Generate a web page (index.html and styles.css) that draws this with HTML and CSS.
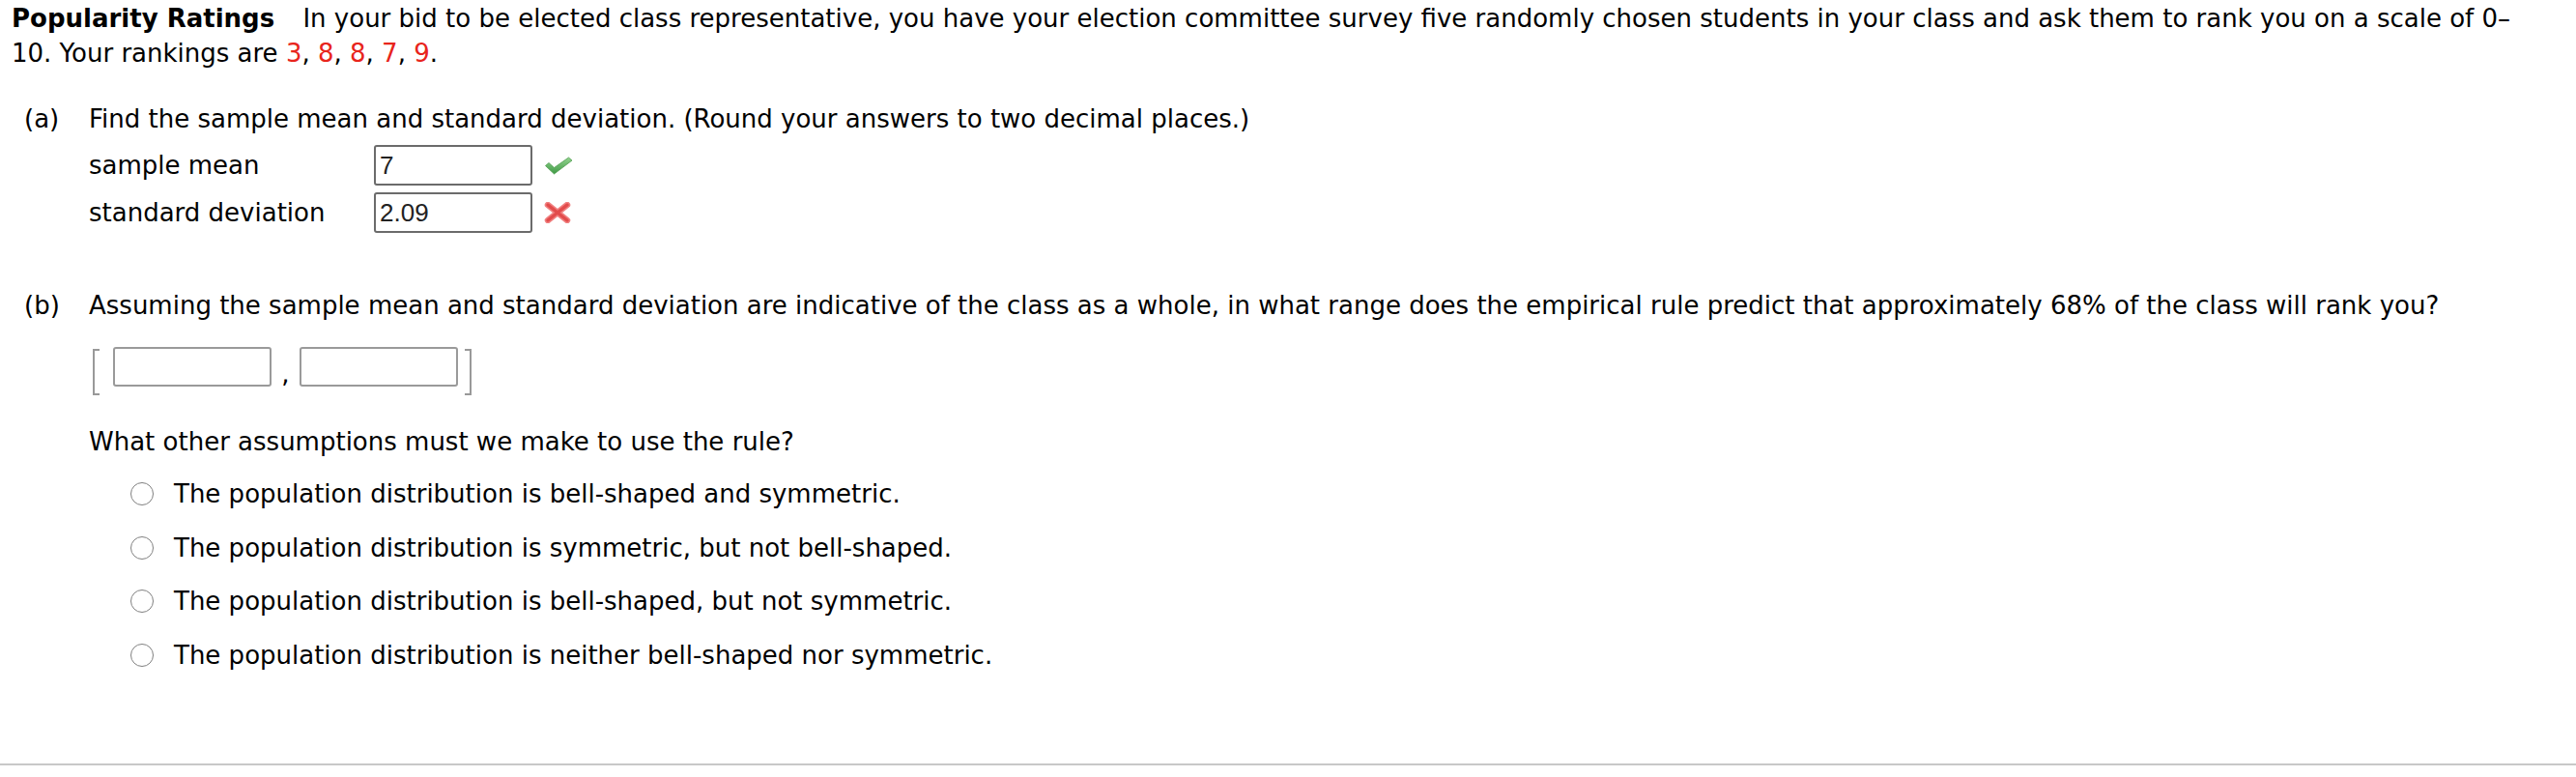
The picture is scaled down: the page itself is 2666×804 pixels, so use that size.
FILE: index.html
```html
<!DOCTYPE html>
<html lang="en">
<head>
<meta charset="utf-8">
<title>Popularity Ratings</title>
<link rel="stylesheet" href="styles.css">
</head>
<body>
<div class="problem">
  <p class="intro"><strong class="title">Popularity Ratings</strong> In your bid to be elected class representative, you have your election committee survey five randomly chosen students in your class and ask them to rank you on a scale of 0–10. Your rankings are <span class="red">3</span>, <span class="red">8</span>, <span class="red">8</span>, <span class="red">7</span>, <span class="red">9</span>.</p>

  <div class="part part-a">
    <div class="part-label">(a)</div>
    <div class="part-body">
      <p class="question">Find the sample mean and standard deviation. (Round your answers to two decimal places.)</p>
      <div class="answers">
        <div class="answer-row">
          <span class="answer-label">sample mean</span>
          <span class="field filled">7</span>
          <svg class="mark" width="30" height="19" viewBox="0 0 30 19" aria-hidden="true">
            <defs>
              <linearGradient id="gchk" x1="0" y1="0" x2="0" y2="1">
                <stop offset="0" stop-color="#93d38f"/>
                <stop offset="1" stop-color="#3f9a45"/>
              </linearGradient>
            </defs>
            <path d="M1.5 9.5 L5 6.5 L10.5 11.5 L25.5 1 L29 4 L10.5 18 Z" fill="url(#gchk)" stroke="#4f9d4f" stroke-width="0.8" stroke-linejoin="round"/>
          </svg>
        </div>
        <div class="answer-row">
          <span class="answer-label">standard deviation</span>
          <span class="field filled">2.09</span>
          <svg class="mark" width="28" height="22" viewBox="0 0 28 22" aria-hidden="true">
            <path d="M4 3 L24 19 M24 3 L4 19" stroke="#f08080" stroke-width="6.5" stroke-linecap="round" fill="none"/>
            <path d="M4 3 L24 19 M24 3 L4 19" stroke="#e24c4c" stroke-width="3.5" stroke-linecap="round" fill="none"/>
          </svg>
        </div>
      </div>
    </div>
  </div>

  <div class="part part-b">
    <div class="part-label">(b)</div>
    <div class="part-body">
      <p class="question">Assuming the sample mean and standard deviation are indicative of the class as a whole, in what range does the empirical rule predict that approximately 68% of the class will rank you?</p>
      <div class="interval">
        <span class="bracket left"></span>
        <span class="field empty"></span>
        <span class="comma">,</span>
        <span class="field empty"></span>
        <span class="bracket right"></span>
      </div>
      <p class="question follow">What other assumptions must we make to use the rule?</p>
      <ul class="choices">
        <li class="choice"><span class="radio"></span><span>The population distribution is bell-shaped and symmetric.</span></li>
        <li class="choice"><span class="radio"></span><span>The population distribution is symmetric, but not bell-shaped.</span></li>
        <li class="choice"><span class="radio"></span><span>The population distribution is bell-shaped, but not symmetric.</span></li>
        <li class="choice"><span class="radio"></span><span>The population distribution is neither bell-shaped nor symmetric.</span></li>
      </ul>
    </div>
  </div>
</div>
</body>
</html>
```

FILE: styles.css
```css
html, body {
  margin: 0;
  padding: 0;
  background: #ffffff;
}

body {
  font-family: "DejaVu Sans", Verdana, sans-serif;
  font-size: 26px;
  line-height: 36px;
  color: #000000;
}

.problem {
  padding: 1px 56px 94px 12px;
  border-bottom: 2px solid #c8c8c8;
}

.intro {
  margin: 0;
}

.title {
  font-weight: bold;
  margin-right: 21px;
}

.red {
  color: #e8251c;
}

.part {
  display: grid;
  grid-template-columns: 67px 1fr;
  margin-left: 13px;
}

.part-a {
  margin-top: 32px;
}

.part-b {
  margin-top: 57px;
}

.part-label,
.question {
  margin: 0;
}

.answers {
  display: flex;
  flex-direction: column;
  gap: 7px;
  margin-top: 9px;
}

.answer-row {
  display: flex;
  align-items: center;
  height: 42px;
}

.answer-label {
  width: 295px;
}

.field {
  display: inline-block;
  box-sizing: border-box;
  width: 164px;
  height: 42px;
  border-radius: 3px;
  background: #ffffff;
  font-family: "Liberation Sans", Arial, sans-serif;
  font-size: 26px;
  line-height: 38px;
  color: #222222;
  padding: 0 4px;
}

.field.filled {
  border: 2px solid #6b6b6b;
}

.field.empty {
  height: 41px;
  border: 2px solid #9a9a9a;
}

.mark {
  margin-left: 12px;
  display: block;
}

.interval {
  display: flex;
  align-items: flex-start;
  margin: 25px 0 0 4px;
  height: 50px;
}

.bracket {
  display: block;
  box-sizing: border-box;
  width: 7px;
  height: 48px;
  margin-top: 2px;
  border-top: 2px solid #999999;
  border-bottom: 2px solid #999999;
}

.bracket.left {
  border-left: 2px solid #999999;
  margin-right: 14px;
}

.bracket.right {
  border-right: 2px solid #999999;
  margin-left: 7px;
}

.comma {
  width: 29px;
  text-align: center;
  line-height: 36px;
  padding-top: 10px;
}

.follow {
  margin-top: 30px;
}

.choices {
  list-style: none;
  margin: 18px 0 0 43px;
  padding: 0;
  display: flex;
  flex-direction: column;
  gap: 19.5px;
}

.choice {
  display: flex;
  align-items: center;
  height: 36px;
}

.radio {
  display: inline-block;
  box-sizing: border-box;
  width: 24px;
  height: 24px;
  border: 1.5px solid #808080;
  border-radius: 50%;
  background: #ffffff;
  margin-right: 21px;
  flex: none;
}
```
